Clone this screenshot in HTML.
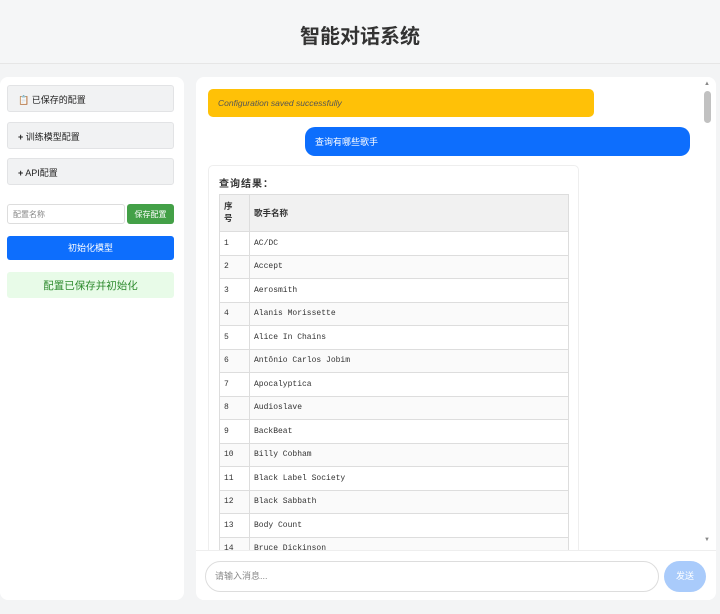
<!DOCTYPE html>
<html><head><meta charset="utf-8"><style>
*{box-sizing:border-box;margin:0;padding:0}
body{width:720px;height:614px;overflow:hidden;background:#f3f4f5;font-family:"Liberation Sans","Noto Sans CJK SC",sans-serif;position:relative}
.hdr{position:absolute;left:0;top:0;width:720px;height:64px;background:#f5f6f7;border-bottom:1px solid #e6e6e6;text-align:center;font-size:20px;font-weight:bold;color:#333;line-height:75px}
.side{position:absolute;left:0;top:77px;width:184px;height:523px;background:#fff;border-radius:8px}
.acc{position:absolute;left:7px;width:167px;height:27px;background:#f1f2f3;border:1px solid #e2e3e5;border-radius:3px;font-size:9px;color:#222;line-height:28px;padding-left:10px}
.chat{position:absolute;left:196px;top:77px;width:520px;height:523px;background:#fff;border-radius:8px;overflow:hidden}
.mono{font-family:"Liberation Mono","Noto Sans CJK SC",monospace}
table{border-collapse:collapse;position:absolute;left:23px;top:117px;width:350px;font-size:8px;color:#333}
td,th{border:1px solid #ddd;padding:0 4px;height:23.5px;text-align:left}
th{background:#f1f1f1;font-weight:bold;height:37px;font-size:8.5px}
tr:nth-child(odd) td{background:#fafafa}
</style></head><body>
<div class="hdr">智能对话系统</div>
<div class="side">
<div class="acc" style="top:8px">📋 已保存的配置</div>
<div class="acc" style="top:45px"><b>+</b> 训练模型配置</div>
<div class="acc" style="top:81px"><b>+</b> API配置</div>
<div style="position:absolute;left:7px;top:127px;width:118px;height:20px;border:1px solid #ddd;border-radius:3px;font-size:8px;color:#888;line-height:19px;padding-left:5px">配置名称</div>
<div style="position:absolute;left:127px;top:127px;width:47px;height:20px;background:#43a047;border-radius:3px;font-size:8px;color:#fff;line-height:21px;text-align:center">保存配置</div>
<div style="position:absolute;left:7px;top:159px;width:167px;height:24px;background:#0d6efd;border-radius:3px;font-size:9px;color:#fff;line-height:25px;text-align:center">初始化模型</div>
<div style="position:absolute;left:7px;top:195px;width:167px;height:26px;background:#e8fbe8;border-radius:3px;font-size:10.5px;color:#2e8b2e;line-height:28px;text-align:center">配置已保存并初始化</div>
</div>
<div class="chat">
<div style="position:absolute;left:12px;top:12px;width:386px;height:28px;background:#ffc107;border-radius:5px;font-size:8.5px;font-style:italic;color:#555;line-height:29px;padding-left:10px">Configuration saved successfully</div>
<div style="position:absolute;left:109px;top:50px;width:385px;height:29px;background:#0d6efd;border-radius:10px;font-size:9px;color:#fff;line-height:30px;padding-left:10px">查询有哪些歌手</div>
<div style="position:absolute;left:12px;top:88px;width:371px;height:440px;border:1px solid #eee;border-radius:5px">
<div style="position:absolute;left:10px;top:9px;font-size:10px;font-weight:bold;color:#333;letter-spacing:1px">查询结果：</div>
</div>
<table class="mono">
<tr><th style="width:30px;line-height:12px">序<br>号</th><th>歌手名称</th></tr>
<tr><td>1</td><td>AC/DC</td></tr><tr><td>2</td><td>Accept</td></tr><tr><td>3</td><td>Aerosmith</td></tr><tr><td>4</td><td>Alanis Morissette</td></tr><tr><td>5</td><td>Alice In Chains</td></tr><tr><td>6</td><td>Antônio Carlos Jobim</td></tr><tr><td>7</td><td>Apocalyptica</td></tr><tr><td>8</td><td>Audioslave</td></tr><tr><td>9</td><td>BackBeat</td></tr><tr><td>10</td><td>Billy Cobham</td></tr><tr><td>11</td><td>Black Label Society</td></tr><tr><td>12</td><td>Black Sabbath</td></tr><tr><td>13</td><td>Body Count</td></tr><tr><td>14</td><td>Bruce Dickinson</td></tr>
</table>
<div style="position:absolute;left:508px;top:14px;width:7px;height:32px;background:#c1c1c1;border-radius:4px"></div>
<div style="position:absolute;left:508px;top:4px;font-size:6px;color:#888">▲</div>
<div style="position:absolute;left:508px;top:460px;font-size:6px;color:#888">▼</div>
<div style="position:absolute;left:0;top:473px;width:520px;height:50px;background:#fff;border-top:1px solid #eee">
<div style="position:absolute;left:9px;top:10px;width:454px;height:31px;border:1px solid #ddd;border-radius:16px;font-size:9px;color:#888;line-height:29px;padding-left:9px">请输入消息...</div>
<div style="position:absolute;left:468px;top:10px;width:42px;height:31px;background:#a9cbfb;border-radius:16px;font-size:9px;color:#fff;line-height:31px;text-align:center">发送</div>
</div>
</div>
</body></html>
